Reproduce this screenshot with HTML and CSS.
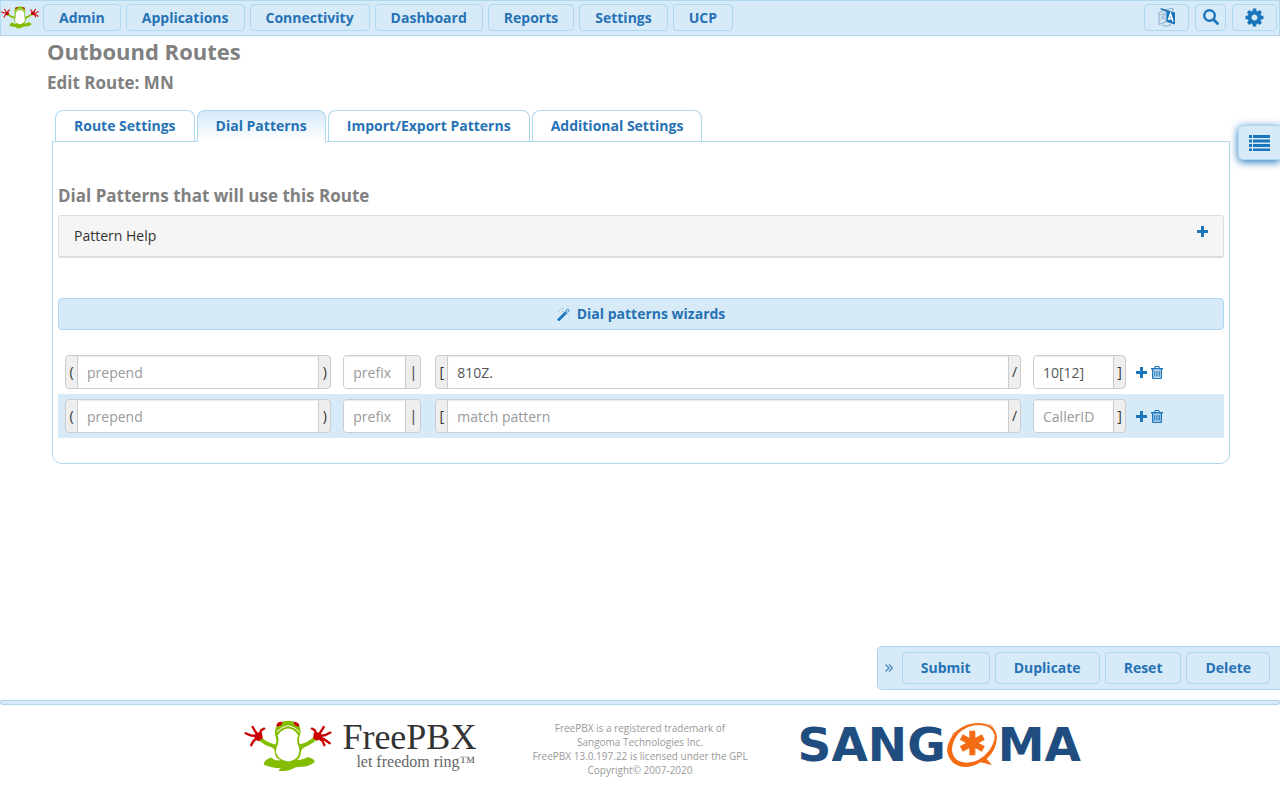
FILE: index.html
```html
<!DOCTYPE html>
<html lang="en">
<head>
  <meta charset="UTF-8">
  <meta name="viewport" content="width=device-width, initial-scale=1.0">
  <title>Outbound Routes</title>
  <link rel="stylesheet" href="styles.css">
</head>
<body>
  <!-- Shared icons -->
  <svg class="sprite" aria-hidden="true">
    <symbol id="frog" viewBox="45 88 264 157">
      <path fill="#84bd00" d="M88 149 L98 141 Q112 156 139 162 Q145 151 139 136 Q135 122 142 108 Q148 91 177 90 Q207 91 212 108 Q218 123 212 137 Q207 151 213 161 Q236 156 254 140 L264 148 Q242 166 225 171 Q217 176 216 187 Q214 203 204 209 Q225 208 237 200 Q256 205 258 214 Q242 230 215 229 Q199 229 190 236 Q174 244 149 241 Q148 237 157 234 Q126 232 104 223 Q104 208 126 201 Q139 213 155 209 Q138 203 137 186 Q138 174 127 170 Q108 165 88 149z"/>
      <path fill="#fff" d="M146 134 Q155 121 166 116 Q178 111 190 117 Q201 123 208 134 Q200 151 210 170 Q214 183 208 195 Q200 210 177 213 Q151 210 142 190 Q138 176 147 161 Q151 146 146 134z"/>
      <path fill="none" stroke="#84bd00" stroke-width="3" d="M145 128 Q158 114 177 109 Q196 113 210 128"/>
      <path fill="none" stroke="#fff" stroke-width="3" d="M143 124 Q158 109 177 105 Q196 108 212 124"/>
      <path fill="#c00" d="M142 108 Q141 92 160 93 Q160 107 142 108zM211 108 Q213 94 194 93 Q194 107 211 108z"/>
      <g fill="none" stroke="#c00" stroke-width="7" stroke-linecap="round" stroke-linejoin="round">
        <path d="M87 136 L76 119 L70 109 M89 136 L96 119 L105 114 M88 136 L66 135 L49 128 M90 138 L73 151 L66 164"/>
        <path d="M267 136 L279 119 L285 109 M265 136 L258 119 L249 114 M266 136 L289 134 L305 126 M264 138 L281 151 L287 164 M268 137 L286 146 L303 158"/>
      </g>
      <path fill="#c00" d="M80 126 L98 126 L101 143 L88 152 L75 145zM255 126 L275 126 L280 144 L264 151 L253 143z"/>
    </symbol>
    <symbol id="plus" viewBox="0 0 11 11">
      <path d="M4 0h3v4h4v3h-4v4h-3v-4h-4v-3h4z"/>
    </symbol>
    <symbol id="trash" viewBox="0 0 12 13">
      <path fill-rule="evenodd" d="M4 0h4l1 2h3v1.500h-1v8q0 1.500-1.300 1.500h-7.400q-1.300 0-1.300-1.500v-8h-1v-1.500h3zM4.600 1l-.5 1h3.800l-.5-1zM2.400 3.500v7.800q0 .5.500.5h6.200q.5 0 .5-.5v-7.800z"/>
      <path d="M3.200 4.500h1.300v6.200h-1.300zM5.350 4.500h1.300v6.200h-1.300zM7.500 4.500h1.300v6.200h-1.300z"/>
    </symbol>
  </svg>

  <header class="navbar">
    <a class="brand" href="#" aria-label="FreePBX"><svg><use href="#frog"/></svg></a>
    <nav class="menu">
      <button class="btn">Admin</button>
      <button class="btn">Applications</button>
      <button class="btn">Connectivity</button>
      <button class="btn">Dashboard</button>
      <button class="btn">Reports</button>
      <button class="btn">Settings</button>
      <button class="btn">UCP</button>
    </nav>
    <div class="tools">
      <button class="btn btn-wide" aria-label="Language">
        <svg width="18" height="20" viewBox="0 0 18 20">
          <path fill="none" stroke="#8aa9cc" d="M1 5.500l7-2.500v12l-7 2.500zM3 3l0-2M8 3l7-2v3M4 18q5 3 9-1M2.500 8l4-1.500q0 4-4 6.500M3.500 9.500l3.500 3"/>
          <path fill="#1b75bb" d="M3 1l6 2v2l-6-2.500zM8.500 3l8.500 2.500v12l-8.500-2.500z"/>
          <path fill="none" stroke="#fff" stroke-width="1.500" d="M10.500 13l2-6.500 2.500 8M11 11.200l3.500 1"/>
        </svg>
      </button>
      <button class="btn btn-search" aria-label="Search">
        <svg width="16" height="16" viewBox="0 0 16 16" fill="none" stroke="#1b75bb"><circle cx="6.500" cy="6.500" r="5.300" stroke-width="2.400"/><path d="M10.500 10.500l4 4" stroke-width="2.800" stroke-linecap="round"/></svg>
      </button>
      <button class="btn btn-wide" aria-label="Options">
        <svg width="21" height="21" viewBox="0 0 1792 1792"><path d="M1152 896q0-106-75-181t-181-75-181 75-75 181 75 181 181 75 181-75 75-181zm512-109v222q0 12-8 23t-20 13l-185 28q-19 54-39 91 35 50 107 138 10 12 10 25t-9 23q-27 37-99 108t-94 71q-12 0-26-9l-138-108q-44 23-91 38-16 136-29 186-7 28-36 28h-222q-14 0-24.500-8.500t-11.500-21.500l-28-184q-49-16-90-37l-141 107q-10 9-25 9-14 0-25-11-126-114-165-168-7-10-7-23 0-12 8-23 15-21 51-66.500t54-70.500q-27-50-41-99l-183-27q-13-2-21-12.500t-8-23.500v-222q0-12 8-23t19-13l186-28q14-46 39-92-40-57-107-138-10-12-10-24 0-10 9-23 26-36 98.500-107.500t94.500-71.500q13 0 26 10l138 107q44-23 91-38 16-136 29-186 7-28 36-28h222q14 0 24.500 8.500t11.500 21.500l28 184q49 16 90 37l142-107q9-9 24-9 13 0 25 10 129 119 165 170 7 8 7 22 0 12-8 23-15 21-51 66.500t-54 70.500q26 50 41 98l183 28q13 2 21 12.500t8 23.500z"/></svg>
      </button>
    </div>
  </header>

  <main class="page">
    <h1>Outbound Routes</h1>
    <h2>Edit Route: MN</h2>

    <div class="tabs" role="tablist">
      <button class="tab" role="tab">Route Settings</button>
      <button class="tab active" role="tab" aria-selected="true">Dial Patterns</button>
      <button class="tab" role="tab">Import/Export Patterns</button>
      <button class="tab" role="tab">Additional Settings</button>
    </div>

    <section class="panel">
      <h3>Dial Patterns that will use this Route</h3>
      <button class="help">
        <span>Pattern Help</span>
        <svg width="11" height="11"><use href="#plus"/></svg>
      </button>

      <button class="btn wizard">
        <svg width="13" height="13" viewBox="0 0 13 13"><path d="M0 11.500l8-8 2 2-8 8z"/><path d="M8.600 2.900l2-2 1.600 1.600-2 2z" fill="none" stroke="#1b75bb" stroke-width=".9"/><path d="M2.500 1h1v1h-1zM5 0h1v1h-1zM5 3h1v1h-1zM1 3h1v1h-1zM10.500 6h1v1h-1z" fill="#7ba7d0"/></svg>
        Dial patterns wizards
      </button>

      <form class="patterns">
        <div class="row">
          <div class="group"><span>(</span><input type="text" placeholder="prepend" aria-label="Prepend"><span>)</span></div>
          <div class="group"><input type="text" placeholder="prefix" aria-label="Prefix"><span class="pipe">|</span></div>
          <div class="group"><span>[</span><input type="text" value="810Z." placeholder="match pattern" aria-label="Match pattern"><span>/</span></div>
          <div class="group"><input type="text" value="10[12]" placeholder="CallerID" aria-label="CallerID"><span>]</span></div>
          <div class="actions">
            <button type="button" aria-label="Add"><svg width="11" height="11"><use href="#plus"/></svg></button>
            <button type="button" aria-label="Delete row"><svg width="12" height="13"><use href="#trash"/></svg></button>
          </div>
        </div>
        <div class="row">
          <div class="group"><span>(</span><input type="text" placeholder="prepend" aria-label="Prepend"><span>)</span></div>
          <div class="group"><input type="text" placeholder="prefix" aria-label="Prefix"><span class="pipe">|</span></div>
          <div class="group"><span>[</span><input type="text" placeholder="match pattern" aria-label="Match pattern"><span>/</span></div>
          <div class="group"><input type="text" placeholder="CallerID" aria-label="CallerID"><span>]</span></div>
          <div class="actions">
            <button type="button" aria-label="Add"><svg width="11" height="11"><use href="#plus"/></svg></button>
            <button type="button" aria-label="Delete row"><svg width="12" height="13"><use href="#trash"/></svg></button>
          </div>
        </div>
      </form>
    </section>
  </main>

  <button class="side-toggle" aria-label="Route list">
    <svg width="21" height="16" viewBox="0 0 21 16"><path d="M0 0h3v3h-3zM4 0h17v3h-17zM0 4.500h3v3h-3zM4 4.500h17v3h-17zM0 9h3v3h-3zM4 9h17v3h-17zM0 13.500h3v2.500h-3zM4 13.500h17v2.500h-17z"/></svg>
  </button>

  <div class="action-bar">
    <button class="collapse" aria-label="Collapse">
      <svg width="8" height="8" viewBox="0 0 8 8" fill="none" stroke="#4784bd" stroke-width="1.200"><path d="M.5.5l3.500 3.500-3.500 3.500M4 .5l3.500 3.500-3.500 3.500"/></svg>
    </button>
    <button class="btn">Submit</button>
    <button class="btn">Duplicate</button>
    <button class="btn">Reset</button>
    <button class="btn">Delete</button>
  </div>

  <footer>
    <div class="footer-bar"></div>
    <div class="footer">
      <a class="freepbx" href="#">
        <svg class="freepbx-frog" aria-hidden="true"><use href="#frog"/></svg>
        <span class="freepbx-text">
          <span class="freepbx-name">FreePBX</span>
          <span class="freepbx-slogan">let freedom ring™</span>
        </span>
      </a>
      <p class="legal">
        FreePBX is a registered trademark of<br>
        Sangoma Technologies Inc.<br>
        FreePBX 13.0.197.22 is licensed under the GPL<br>
        Copyright© 2007-2020
      </p>
      <a class="sangoma" href="#" aria-label="Sangoma">
        <span>SANG</span>
        <svg width="52" height="46" viewBox="516 66 156 138">
          <path fill="#f36c14" fill-rule="evenodd" d="M519 151 Q522 116 550 91 Q579 68 616 69 Q666 72 669 112 Q668 150 638 177 L654 195 L620 187 Q598 201 573 201 Q526 198 519 151zM534 151 Q539 187 577 188 Q618 187 645 152 Q663 128 662 106 Q655 76 616 75 Q580 75 554 100 Q534 123 534 151z"/>
          <path fill="none" stroke="#f36c14" stroke-width="18" d="M595 92v74M562 111l66 36M562 147l66-36"/>
          <path fill="none" stroke="#f36c14" stroke-width="2" d="M535 104q4-7 10-8M644 72q10 4 13 12"/>
        </svg>
        <span>MA</span>
      </a>
    </div>
  </footer>
</body>
</html>
```
FILE: styles.css
```css
* {
  box-sizing: border-box;
}

body {
  margin: 0;
  min-height: 100vh;
  display: flex;
  flex-direction: column;
  font-family: "Open Sans", sans-serif;
  font-size: 14px;
  line-height: 20px;
  color: #333;
  background: #fff;
  fill: #1b75bb;
}

button,
input {
  font: inherit;
}

button {
  cursor: pointer;
}

svg {
  display: block;
}

.sprite {
  position: absolute;
  width: 0;
  height: 0;
}

h1,
h2,
h3 {
  margin: 0;
  color: #808080;
  font-weight: 700;
}

.btn {
  display: flex;
  align-items: center;
  justify-content: center;
  height: 32px;
  padding: 0 18px;
  background: #d7eaf8;
  border: 1px solid #afd7f0;
  border-radius: 4px;
  color: #2672b5;
  font-weight: 700;
}

/* Top navigation */
.navbar {
  display: flex;
  align-items: center;
  height: 36px;
  padding: 0 2px 2px 0;
  background: #d7eaf8;
  border: 1px solid #afd7f0;
}

.brand {
  width: 42px;
}

.brand svg {
  width: 38px;
  height: 23px;
}

.menu,
.tools {
  display: flex;
  gap: 5px;
}

.navbar .btn {
  height: 27px;
  padding: 1px 15px 0;
}

.tools {
  margin-left: auto;
  gap: 6px;
}

.navbar .btn-wide {
  width: 45px;
  padding: 0;
}

.navbar .btn-search {
  width: 31px;
  padding: 0;
}

/* Page content */
.page {
  flex: 1;
  padding: 0 50px 120px 52px;
}

h1 {
  margin: 3px 0 0 -5px;
  font-size: 22px;
  line-height: 24px;
}

h2 {
  margin: 10px 0 17px -5px;
  font-size: 17px;
  line-height: 20px;
}

.tabs {
  display: flex;
  gap: 2px;
  padding-left: 3px;
}

.tab {
  height: 31px;
  padding: 0 18px;
  background: #fff;
  border: 1px solid #afd7f0;
  border-bottom: 0;
  border-radius: 8px 8px 0 0;
  color: #2672b5;
  font-weight: 700;
}

.tab.active {
  z-index: 1;
  height: 32px;
  margin-bottom: -1px;
  padding-bottom: 1px;
  background: linear-gradient(#d7eaf8, #fff);
}

.panel {
  padding: 44px 5px 25px;
  border: 1px solid #afd7f0;
  border-radius: 0 0 10px 10px;
}

h3 {
  margin-bottom: 9px;
  font-size: 17px;
  line-height: 20px;
}

.help {
  display: flex;
  justify-content: space-between;
  width: 100%;
  height: 43px;
  margin-bottom: 40px;
  padding: 10px 15px;
  background: #f5f5f5;
  border: 1px solid #ddd;
  border-bottom-width: 2px;
  border-radius: 3px;
  color: #333;
}

.wizard {
  width: 100%;
  gap: 7px;
}

.patterns {
  margin-top: 20px;
}

.row {
  display: grid;
  grid-template-columns: 5fr 80px 11fr 93px 79px;
  gap: 12px;
  align-items: center;
  height: 44px;
  padding: 0 7px;
}

.row:nth-child(even) {
  background: #d7eaf8;
}

.group {
  display: flex;
  height: 34px;
  background: #eee;
  border: 1px solid #ccc;
  border-radius: 4px;
  overflow: hidden;
}

.group:nth-child(2) {
  margin-right: 2px;
}

.group span {
  width: 11px;
  line-height: 32px;
  text-align: center;
}

.group .pipe {
  width: 14px;
}

.group input {
  flex: 1;
  min-width: 0;
  padding: 1px 9px 0;
  background: #fff;
  border: 0 solid #ccc;
  border-right-width: 1px;
  box-shadow: inset 0 1px 1px rgba(0, 0, 0, 0.08);
  color: #555;
}

.group span + input {
  border-left-width: 1px;
}

.group input::placeholder {
  color: #999;
}

.actions {
  display: flex;
  gap: 4px;
  margin-left: -2px;
}

.actions button {
  padding: 0;
  background: none;
  border: 0;
}

/* Floating controls */
.side-toggle {
  position: fixed;
  top: 125px;
  right: 0;
  width: 42px;
  height: 35px;
  padding: 0 0 0 10px;
  background: #d7eaf8;
  border: 1px solid #afd7f0;
  border-right: 0;
  border-radius: 5px 0 0 5px;
  box-shadow: 0 2px 8px #1b75bb;
}

.action-bar {
  position: fixed;
  right: 0;
  bottom: 110px;
  display: flex;
  gap: 5px;
  padding: 5px 10px 5px 7px;
  background: #d7eaf8;
  border: 1px solid #afd7f0;
  border-right: 0;
  border-radius: 5px 0 0 5px;
}

.collapse {
  width: 12px;
  padding: 0;
  background: none;
  border: 0;
}

/* Footer */
.footer-bar {
  height: 5px;
  background: #d7eaf8;
  border: 1px solid #afd7f0;
  border-radius: 2px;
}

.footer {
  display: grid;
  grid-template-columns: 1fr auto 1fr;
  gap: 50px;
  align-items: start;
  min-height: 95px;
  padding-top: 15px;
}

.freepbx {
  display: flex;
  justify-self: end;
  gap: 10px;
  margin-right: 6px;
  text-decoration: none;
}

.freepbx-frog {
  width: 88px;
  height: 52px;
}

.freepbx-text {
  display: flex;
  flex-direction: column;
  font-family: "Liberation Serif", serif;
}

.freepbx-name {
  font-size: 36px;
  line-height: 34px;
  color: #333;
}

.freepbx-slogan {
  padding-left: 14px;
  font-size: 16px;
  line-height: 16px;
  color: #666;
}

.legal {
  margin: 0;
  padding-top: 1px;
  font-size: 10px;
  line-height: 14px;
  text-align: center;
  color: #999;
}

.sangoma {
  display: flex;
  align-items: center;
  height: 50px;
  font-family: "DejaVu Sans", sans-serif;
  font-size: 47px;
  font-weight: 700;
  line-height: 50px;
  color: #204d80;
  text-decoration: none;
}
```
